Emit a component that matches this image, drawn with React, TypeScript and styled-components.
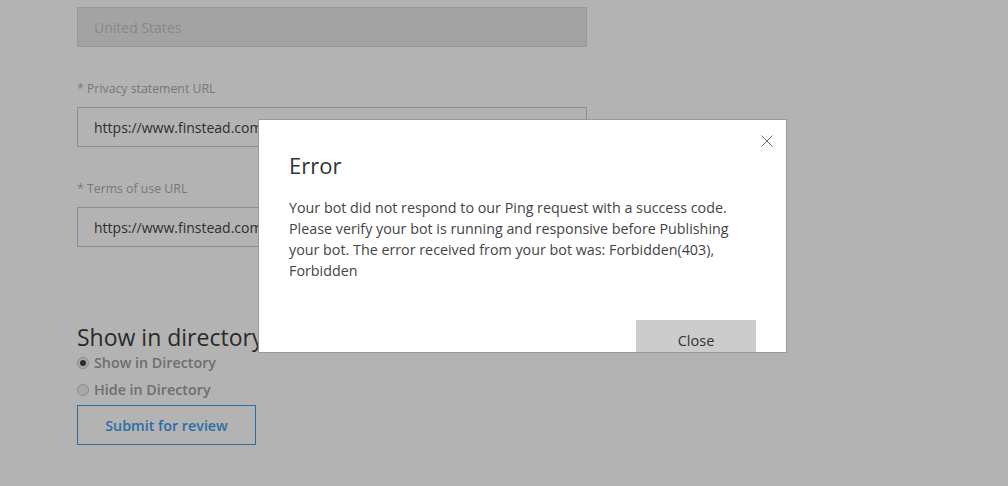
import styled, { createGlobalStyle } from "styled-components";

const GlobalStyle = createGlobalStyle`
  html, body {
    margin: 0;
    padding: 0;
    background: #b3b3b3;
    font-family: "Open Sans", "Noto Sans", sans-serif;
  }
`;

const Page = styled.div`
  width: 1008px;
  height: 486px;
  overflow: hidden;
  position: relative;
`;

const Form = styled.div`
  width: 510px;
  padding: 7px 0 0 77px;
  display: flex;
  flex-direction: column;
`;

const Field = styled.div<{ $gap?: number }>`
  display: flex;
  flex-direction: column;
  margin-top: ${(p) => p.$gap ?? 0}px;
`;

const Label = styled.label`
  font-size: 12.3px;
  line-height: 16px;
  color: #777;
  margin-bottom: 10px;
`;

const Input = styled.div<{ $disabled?: boolean }>`
  box-sizing: border-box;
  height: 40px;
  padding: 0 16px;
  display: flex;
  align-items: center;
  font-size: 14px;
  white-space: nowrap;
  overflow: hidden;
  border: 1px solid ${(p) => (p.$disabled ? "#989898" : "#8d8d8d")};
  background: ${(p) => (p.$disabled ? "#a3a3a3" : "transparent")};
  color: ${(p) => (p.$disabled ? "#888" : "#2e2e2e")};
`;

const Heading = styled.h2`
  margin: 78px 0 0;
  font-size: 23px;
  font-weight: 400;
  line-height: 24px;
  color: #2a2a2a;
`;

const RadioRow = styled.label`
  display: flex;
  align-items: center;
  gap: 5px;
  height: 27px;
  font-size: 14.3px;
  font-weight: 600;
  color: #6e6e6e;
`;

const RadioDot = styled.span<{ $checked?: boolean }>`
  box-sizing: border-box;
  width: 12px;
  height: 12px;
  border-radius: 50%;
  border: 1px solid #8a8a8a;
  background: #a8a8a8;
  display: flex;
  align-items: center;
  justify-content: center;
  &::after {
    content: "";
    width: 6px;
    height: 6px;
    border-radius: 50%;
    background: ${(p) => (p.$checked ? "#2e2e2e" : "transparent")};
  }
`;

const OutlineButton = styled.button`
  box-sizing: border-box;
  margin-top: 2px;
  width: 179px;
  height: 40px;
  border: 1px solid #2d6da6;
  background: transparent;
  color: #2d6da6;
  font-family: inherit;
  font-size: 14.3px;
  font-weight: 600;
`;

const Modal = styled.div`
  position: absolute;
  left: 258px;
  top: 119px;
  box-sizing: border-box;
  width: 529px;
  height: 234px;
  background: #fff;
  border: 1px solid #999;
  overflow: hidden;
  padding: 28px 30px 0 30px;
`;

const CloseX = styled.button`
  position: absolute;
  top: 14px;
  right: 12px;
  width: 14px;
  height: 14px;
  padding: 0;
  border: 0;
  background: none;
  display: flex;
`;

const Title = styled.h1`
  margin: 0;
  font-size: 22px;
  font-weight: 400;
  line-height: 34px;
  color: #333;
`;

const Message = styled.p`
  margin: 15px 0 0;
  font-size: 14.3px;
  line-height: 21px;
  color: #444;
  width: 442px;
`;

const Footer = styled.div`
  display: flex;
  justify-content: flex-end;
  margin-top: 39px;
`;

const CloseButton = styled.button`
  width: 120px;
  height: 40px;
  border: 0;
  background: #cccccc;
  color: #333;
  font-family: inherit;
  font-size: 14.5px;
`;

export default function App() {
  return (
    <Page>
      <GlobalStyle />
      <Form>
        <Input $disabled>United States</Input>
        <Field $gap={34}>
          <Label>* Privacy statement URL</Label>
          <Input>https://www.finstead.com/privacy</Input>
        </Field>
        <Field $gap={34}>
          <Label>* Terms of use URL</Label>
          <Input>https://www.finstead.com/terms</Input>
        </Field>
        <Heading>Show in directory</Heading>
        <RadioRow>
          <RadioDot $checked />
          Show in Directory
        </RadioRow>
        <RadioRow>
          <RadioDot />
          Hide in Directory
        </RadioRow>
        <OutlineButton>Submit for review</OutlineButton>
      </Form>
      <Modal role="dialog">
        <CloseX aria-label="Close">
          <svg width="14" height="14" viewBox="0 0 14 14">
            <path d="M1.5 1.5 L12.5 12.5 M12.5 1.5 L1.5 12.5" stroke="#666" strokeWidth="1" />
          </svg>
        </CloseX>
        <Title>Error</Title>
        <Message>
          Your bot did not respond to our Ping request with a success code.
          Please verify your bot is running and responsive before Publishing
          your bot. The error received from your bot was: Forbidden(403),
          Forbidden
        </Message>
        <Footer>
          <CloseButton>Close</CloseButton>
        </Footer>
      </Modal>
    </Page>
  );
}
